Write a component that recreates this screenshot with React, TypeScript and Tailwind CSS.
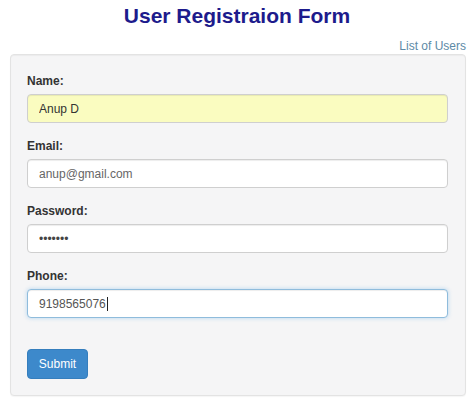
export default function App() {
  const font = { fontFamily: '"Liberation Sans", Arial, sans-serif' };

  return (
    <div className="min-h-[407px] w-[474px] bg-white" style={font}>
      <h1 className="pt-[4px] text-center text-[21px] font-bold leading-[24px] text-[#1d1b8c]">
        User Registraion Form
      </h1>

      <div className="mt-[10px] flex justify-end pr-[8px]">
        <a href="#" className="text-[12px] leading-[16px] text-[#5d8aa6]">
          List of Users
        </a>
      </div>

      <form className="mx-[10px] w-[456px] rounded-[4px] border border-[#e3e3e3] bg-[#f5f5f6] px-[16px] pt-[18px] pb-[16px] shadow-[inset_0_1px_1px_rgba(0,0,0,0.04),0_1px_1px_rgba(0,0,0,0.04)]">
        <Field label="Name:" value="Anup D" bg="bg-[#fafcc0]" textColor="text-[#333]" />
        <Field label="Email:" value="anup@gmail.com" textColor="text-[#666]" />
        <Field label="Password:" value="•••••••" textColor="text-[#444]" />

        <div className="flex flex-col">
          <label className="text-[12px] font-bold leading-[17px] text-[#333]">Phone:</label>
          <div className="mt-[4px] flex h-[29px] w-[421px] items-center rounded-[4px] border border-[#8fbcdc] bg-white px-[11px] text-[12px] text-[#555] shadow-[inset_0_1px_1px_rgba(0,0,0,0.075),0_0_4px_rgba(102,175,233,0.45)]">
            9198565076
            <span className="ml-[1px] inline-block h-[14px] w-px bg-[#222]" />
          </div>
        </div>

        <button
          type="button"
          className="mt-[31px] h-[30px] w-[61px] rounded-[4px] border border-[#357ebd] bg-[#3d89cb] text-[12px] text-white"
        >
          Submit
        </button>
      </form>
    </div>
  );
}

function Field({
  label,
  value,
  bg = 'bg-white',
  textColor,
}: {
  label: string;
  value: string;
  bg?: string;
  textColor: string;
}) {
  return (
    <div className="mb-[15px] flex flex-col">
      <label className="text-[12px] font-bold leading-[17px] text-[#333]">{label}</label>
      <input
        readOnly
        value={value}
        className={`mt-[4px] h-[29px] w-[421px] rounded-[4px] border border-[#cfcfcf] px-[11px] text-[12px] outline-none shadow-[inset_0_1px_1px_rgba(0,0,0,0.075)] ${bg} ${textColor}`}
      />
    </div>
  );
}
